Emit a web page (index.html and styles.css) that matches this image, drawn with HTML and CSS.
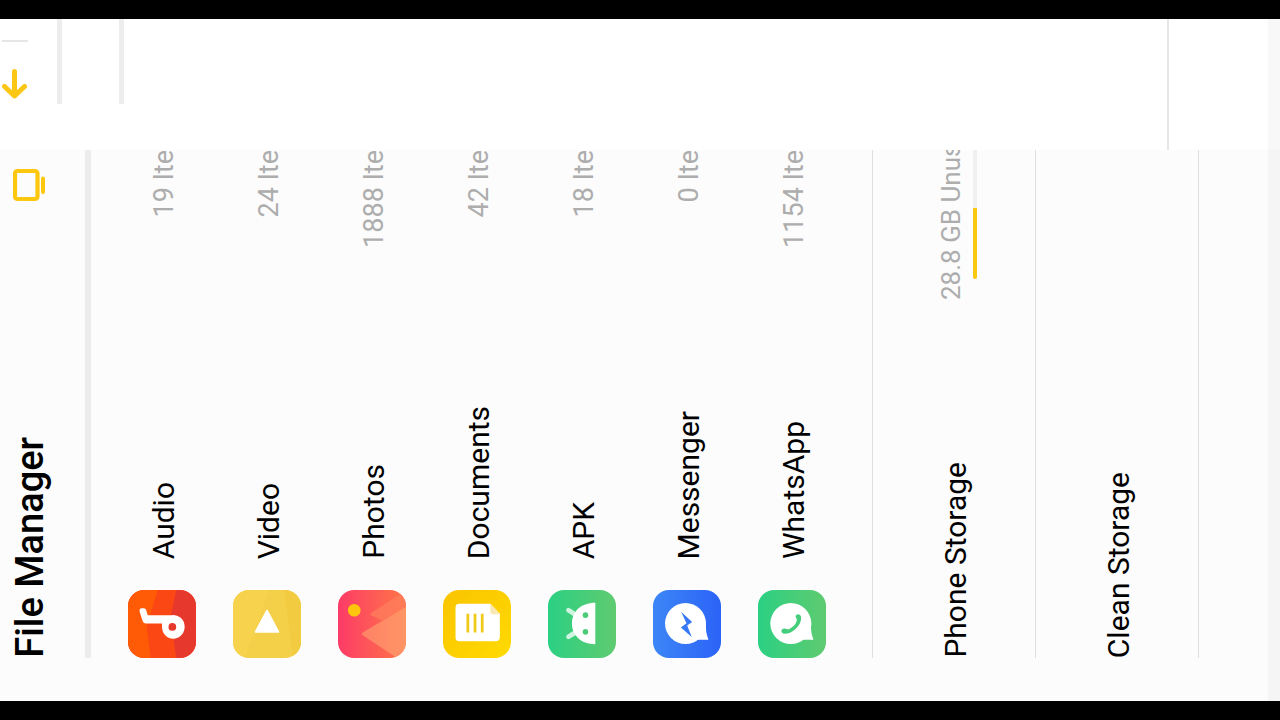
FILE: index.html
```html
<!DOCTYPE html>
<html lang="en">
<head>
<meta charset="utf-8">
<title>File Manager</title>
<link rel="stylesheet" href="styles.css">
</head>
<body>
<div class="toolbar">
  <div class="toolbar-actions">
    <span class="tick"></span>
    <button class="icon-button" aria-label="Back">
      <svg width="28" height="32" viewBox="0 0 28 32" fill="none" stroke="#fcc615" stroke-width="5" stroke-linecap="round" stroke-linejoin="round"><path d="M14.500 3.500V27M4.500 18.500L14.500 28L24.500 18.500"/></svg>
    </button>
  </div>
  <span class="rule"></span>
  <span class="rule"></span>
  <span class="edge-line"></span>
</div>
<main class="board">
  <header class="heading">
    <button class="icon-button" aria-label="Clipboard">
      <svg width="34" height="34" viewBox="0 0 34 34" fill="none" stroke="#fcc70c" stroke-linecap="round"><rect x="2" y="3" width="22.500" height="28" rx="2.500" stroke-width="4.200"/><path d="M30 10.500V24" stroke-width="4"/></svg>
    </button>
    <h1 class="title side">File Manager</h1>
  </header>
  <ul class="categories">
    <li><a class="category" href="#audio">
      <span class="count side">19 Ite</span><span class="label side">Audio</span>
      <svg class="tile" viewBox="0 0 69 69"><path fill="#fb4714" d="M0 0H69V69H0Z"/><path fill="#ff5a05" d="M0 0H30L19 37L23 69H0Z"/><path fill="#e7382d" d="M49 0H69V69H49L43 28Z"/><path fill="#fff" d="M14 18.500H16Q18 18.500 18.500 20.500L20 25.500H44.500A11.500 12 0 1 1 34.500 37.500V34H18Q15.500 34 14.800 31.500L11.800 22Q11.300 18.500 14 18.500Z"/><circle cx="45" cy="37.500" r="3.900" fill="#e7382d"/></svg>
    </a></li>
    <li><a class="category" href="#video">
      <span class="count side">24 Ite</span><span class="label side">Video</span>
      <svg class="tile" viewBox="0 0 69 69"><path fill="#f4cf48" d="M0 0H69V69H0Z"/><path fill="#f6d24d" d="M0 0H37L12 69H0Z"/><path fill="#f2cb40" d="M52 0H69V69H61Z"/><path fill="#fff" stroke="#fff" stroke-width="2" stroke-linejoin="round" d="M34.500 21L46 42.500H23Z"/></svg>
    </a></li>
    <li><a class="category" href="#photos">
      <span class="count side">1888 Ite</span><span class="label side">Photos</span>
      <svg class="tile" viewBox="0 0 69 69"><defs><linearGradient id="photo"><stop stop-color="#fc3b67"/><stop offset="1" stop-color="#ff7747"/></linearGradient><linearGradient id="peak"><stop stop-color="#ff8168"/><stop offset="1" stop-color="#ff9564"/></linearGradient></defs><path fill="url(#photo)" d="M0 0H69V69H0Z"/><path fill="#ff7d5c" fill-opacity=".75" d="M34 23L65 3L69 7V17L45 31L34 26Q32 24.500 34 23Z"/><path fill="url(#peak)" d="M25 43L69 17V69H60L25 46Q23 44.500 25 43Z"/><circle cx="16.500" cy="20.500" r="6.400" fill="#ffc60d"/></svg>
    </a></li>
    <li><a class="category" href="#documents">
      <span class="count side">42 Ite</span><span class="label side">Documents</span>
      <svg class="tile" viewBox="0 0 69 69"><defs><linearGradient id="doc" y2="1"><stop stop-color="#fac400"/><stop offset="1" stop-color="#ffda00"/></linearGradient></defs><path fill="url(#doc)" d="M0 0H69V69H0Z"/><path fill="#fff" d="M16.500 14H48L57.700 24V47.500Q57.700 52 53.500 52H16.500Q12.700 52 12.700 48V18Q12.700 14 16.500 14Z"/><path fill="#fbe8b1" d="M48 14L57.700 24.500H51Q48 24.500 48 22Z"/><path stroke="#f0ca19" stroke-width="2.800" d="M25.200 24V43M32.500 24V43M39.800 24V43"/></svg>
    </a></li>
    <li><a class="category" href="#apk">
      <span class="count side">18 Ite</span><span class="label side">APK</span>
      <svg class="tile" viewBox="0 0 69 69"><defs><linearGradient id="green"><stop stop-color="#2bd083"/><stop offset="1" stop-color="#5fcb70"/></linearGradient></defs><path fill="url(#green)" d="M0 0H69V69H0Z"/><path stroke="#cff4df" stroke-width="4.800" stroke-linecap="round" d="M20.800 20.500L28 25M20.800 47.500L28 43"/><path fill="#fff" d="M48 13V55C33 55 24.300 45.500 24.300 34S33 13 48 13Z"/><g fill="#4dcc78"><circle cx="38" cy="25.500" r="2.800"/><circle cx="38" cy="42.500" r="2.800"/></g></svg>
    </a></li>
    <li><a class="category" href="#messenger">
      <span class="count side">0 Ite</span><span class="label side">Messenger</span>
      <svg class="tile" viewBox="0 0 69 69"><defs><linearGradient id="blue"><stop stop-color="#3d86f6"/><stop offset="1" stop-color="#2b63f7"/></linearGradient></defs><path fill="url(#blue)" d="M0 0H69V69H0Z"/><circle cx="33" cy="34" r="20.800" fill="#fff"/><path fill="#fff" d="M53.800 34Q53 42 56.300 50.500L42 50.500Z"/><path fill="#3778f6" d="M28.500 22L39.700 32.500L34.700 36L39.300 47.800L28.300 38L34 33.800Z"/></svg>
    </a></li>
    <li><a class="category" href="#whatsapp">
      <span class="count side">1154 Ite</span><span class="label side">WhatsApp</span>
      <svg class="tile" viewBox="0 0 69 69"><path fill="url(#green)" d="M0 0H69V69H0Z"/><circle cx="33.300" cy="34" r="20.800" fill="#fff"/><path fill="#fff" d="M54 34Q53 42 56.300 50.500L42 50.500Z"/><path fill="#44cd7b" d="M38 26.500Q38.500 24.500 41 24.500Q43.800 25 43.800 28.500Q43.500 35 38 39.500Q32.500 44.500 27 44.500Q23.500 44 23.800 41Q24.500 38.800 27 39L31 40Q38.500 36.500 39.500 30.500Z"/></svg>
    </a></li>
  </ul>
  <section class="storage">
    <div class="usage">
      <span class="amount side">28.8 GB Unus</span>
      <div class="meter" role="progressbar" aria-label="Phone storage used" aria-valuenow="55"><div class="meter-fill" style="height:55%"></div></div>
    </div>
    <a class="label side" href="#phone">Phone Storage</a>
  </section>
  <section class="storage">
    <a class="label side" href="#clean">Clean Storage</a>
  </section>
  <section class="storage"></section>
</main>
</body>
</html>
```
FILE: styles.css
```css
* {
  box-sizing: border-box;
}

body {
  margin: 0;
  min-height: 100vh;
  padding: 19px 0;
  display: flex;
  flex-direction: column;
  background: #000;
  color: #000;
  font-family: Roboto, "Liberation Sans", sans-serif;
}

a {
  color: inherit;
  text-decoration: none;
}

/* Text that reads from bottom to top */
.side {
  writing-mode: vertical-rl;
  transform: rotate(180deg);
  white-space: nowrap;
}

.icon-button {
  padding: 0;
  border: 0;
  background: none;
  display: flex;
}

.toolbar {
  min-height: 131px;
  display: flex;
  background: #fff;
  border-right: 12px solid #f8f8f8;
}

.toolbar-actions {
  width: 57px;
  padding-top: 21px;
  display: flex;
  flex-direction: column;
  align-items: flex-start;
  gap: 26px;
}

.tick {
  width: 26px;
  height: 2px;
  margin-left: 2px;
  background: #e6e6e6;
}

.rule {
  width: 5px;
  height: 85px;
  margin-right: 57px;
  background: #ededed;
}

.edge-line {
  width: 2px;
  margin-left: auto;
  margin-right: 99px;
  background: #e6e6e6;
}

.board {
  flex: 1;
  padding-bottom: 43px;
  display: grid;
  grid-template-columns: 91px 781fr 163fr 163fr 70fr;
  background: #fcfcfc;
  border-right: 12px solid #f5f5f5;
}

.heading {
  padding: 18px 25px 0 0;
  display: flex;
  flex-direction: column;
  justify-content: space-between;
  align-items: center;
  border-right: 6px solid #ececec;
}

.title {
  margin: 0;
  font-size: 38px;
  line-height: 44px;
  font-weight: 500;
}

.categories {
  margin: 0;
  padding: 0 27px 0 18px;
  list-style: none;
  display: grid;
  grid-template-columns: repeat(7, 1fr);
}

.category {
  height: 100%;
  display: flex;
  flex-direction: column;
  align-items: center;
}

.count,
.amount {
  color: #adadad;
  font-size: 27px;
  line-height: 32px;
}

.count {
  margin-left: 4px;
}

.label {
  margin-top: auto;
  margin-left: 4px;
  font-size: 30px;
  line-height: 36px;
}

.tile {
  width: 68px;
  height: 68px;
  margin-top: 31px;
  border-radius: 16px;
}

.storage {
  display: flex;
  flex-direction: column;
  align-items: center;
  border-left: 1px solid #dfdfdf;
}

.usage {
  height: 150px;
  padding-left: 4px;
  display: flex;
  align-items: flex-start;
  gap: 6px;
  overflow: hidden;
}

.amount {
  height: 150px;
  font-size: 26px;
}

.meter {
  width: 4px;
  height: 129px;
  display: flex;
  align-items: flex-end;
  background: #f0f0f0;
  border-radius: 0 0 2px 2px;
}

.meter-fill {
  width: 100%;
  background: #fac90f;
  border-radius: 0 0 2px 2px;
}
```
